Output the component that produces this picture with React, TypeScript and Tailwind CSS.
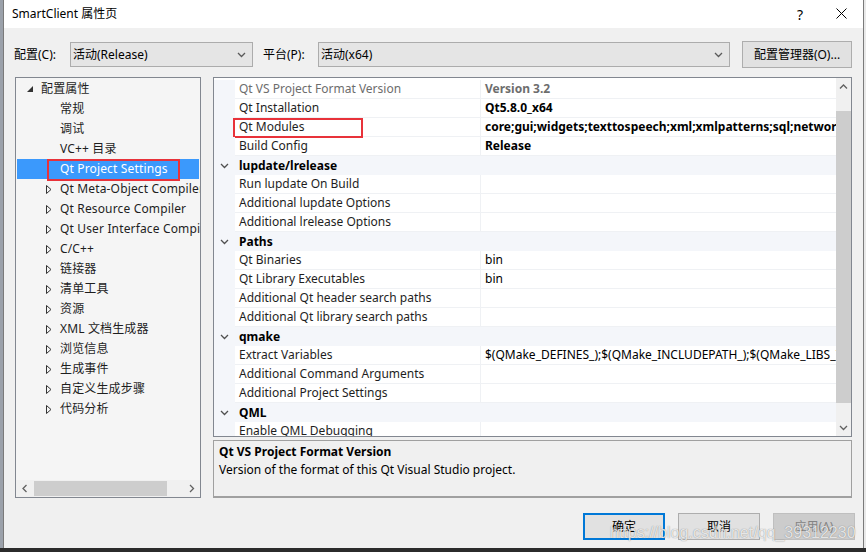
import React from 'react';

const FONT = { fontFamily: '"Noto Sans", "Noto Sans CJK SC", sans-serif' };

type TreeItem = { label: string; level: 0 | 1; arrow?: 'open' | 'closed'; selected?: boolean };

const treeItems: TreeItem[] = [
  { label: '配置属性', level: 0, arrow: 'open' },
  { label: '常规', level: 1 },
  { label: '调试', level: 1 },
  { label: 'VC++ 目录', level: 1 },
  { label: 'Qt Project Settings', level: 1, selected: true },
  { label: 'Qt Meta-Object Compiler', level: 1, arrow: 'closed' },
  { label: 'Qt Resource Compiler', level: 1, arrow: 'closed' },
  { label: 'Qt User Interface Compiler', level: 1, arrow: 'closed' },
  { label: 'C/C++', level: 1, arrow: 'closed' },
  { label: '链接器', level: 1, arrow: 'closed' },
  { label: '清单工具', level: 1, arrow: 'closed' },
  { label: '资源', level: 1, arrow: 'closed' },
  { label: 'XML 文档生成器', level: 1, arrow: 'closed' },
  { label: '浏览信息', level: 1, arrow: 'closed' },
  { label: '生成事件', level: 1, arrow: 'closed' },
  { label: '自定义生成步骤', level: 1, arrow: 'closed' },
  { label: '代码分析', level: 1, arrow: 'closed' },
];

type GridRow =
  | { kind: 'cat'; name: string }
  | { kind: 'prop'; name: string; value?: string; bold?: boolean; readOnly?: boolean; marked?: boolean };

const gridRows: GridRow[] = [
  { kind: 'prop', name: 'Qt VS Project Format Version', value: 'Version 3.2', bold: true, readOnly: true },
  { kind: 'prop', name: 'Qt Installation', value: 'Qt5.8.0_x64', bold: true },
  { kind: 'prop', name: 'Qt Modules', value: 'core;gui;widgets;texttospeech;xml;xmlpatterns;sql;network;multimedia', bold: true, marked: true },
  { kind: 'prop', name: 'Build Config', value: 'Release', bold: true },
  { kind: 'cat', name: 'lupdate/lrelease' },
  { kind: 'prop', name: 'Run lupdate On Build' },
  { kind: 'prop', name: 'Additional lupdate Options' },
  { kind: 'prop', name: 'Additional lrelease Options' },
  { kind: 'cat', name: 'Paths' },
  { kind: 'prop', name: 'Qt Binaries', value: 'bin' },
  { kind: 'prop', name: 'Qt Library Executables', value: 'bin' },
  { kind: 'prop', name: 'Additional Qt header search paths' },
  { kind: 'prop', name: 'Additional Qt library search paths' },
  { kind: 'cat', name: 'qmake' },
  { kind: 'prop', name: 'Extract Variables', value: '$(QMake_DEFINES_);$(QMake_INCLUDEPATH_);$(QMake_LIBS_);$(QMake_LIBPATH_)' },
  { kind: 'prop', name: 'Additional Command Arguments' },
  { kind: 'prop', name: 'Additional Project Settings' },
  { kind: 'cat', name: 'QML' },
  { kind: 'prop', name: 'Enable QML Debugging' },
];

function Chevron({ dir, className = '' }: { dir: 'up' | 'down' | 'left' | 'right'; className?: string }) {
  const pts = {
    down: '1,1 4.5,4.5 8,1',
    up: '1,4.5 4.5,1 8,4.5',
    left: '4.5,1 1,4.5 4.5,8',
    right: '1,1 4.5,4.5 1,8',
  }[dir];
  const vertical = dir === 'up' || dir === 'down';
  return (
    <svg width={vertical ? 9 : 6} height={vertical ? 6 : 9} viewBox={vertical ? '0 0 9 6' : '0 0 6 9'} className={className}>
      <polyline points={pts} fill="none" stroke="currentColor" strokeWidth="1.3" />
    </svg>
  );
}

function Combo({ text, width }: { text: string; width: string }) {
  return (
    <div className={`${width} h-[25px] bg-[#e5e5e5] border border-[#acacac] flex items-center pl-[2px] pr-[6px]`}>
      <span className="flex-1 text-[12px] leading-[16px] text-[#000]">{text}</span>
      <Chevron dir="down" className="text-[#5a5a5a]" />
    </div>
  );
}

function Tree() {
  return (
    <div className="w-[186px] h-[421px] border border-[#828790] bg-[#f5f5f5] flex flex-col">
      <div className="flex-1 overflow-hidden pt-[1px]">
        {treeItems.map((it) => (
          <div
            key={it.label}
            className={`relative mx-[1px] h-[20px] flex items-center whitespace-nowrap ${it.level === 0 ? 'pl-[10px]' : 'pl-[29px]'} ${it.selected ? 'bg-[#3b99fc] text-white' : 'text-[#1e1e1e]'}`}
          >
            <span className="w-[14px] shrink-0 flex items-center">
              {it.arrow === 'open' && (
                <svg width="6" height="6" viewBox="0 0 6 6">
                  <polygon points="6,0 6,6 0,6" fill="#333" />
                </svg>
              )}
              {it.arrow === 'closed' && (
                <svg width="6" height="9" viewBox="0 0 6 9">
                  <polygon points="0.5,0.5 5,4.5 0.5,8.5" fill="none" stroke="#333" strokeWidth="1" />
                </svg>
              )}
            </span>
            <span className="text-[12px] leading-[20px] tracking-[0.15px]">{it.label}</span>
            {it.selected && (
              <div className="absolute left-[30px] top-0 w-[133px] h-[22px] border-2 border-[#e8323a]" />
            )}
          </div>
        ))}
      </div>
      <div className="h-[17px] bg-[#f0f0f0] flex items-center">
        <div className="w-[17px] h-full flex items-center justify-center text-[#606060]">
          <Chevron dir="left" />
        </div>
        <div className="ml-[1px] w-[133px] h-[15px] bg-[#cdcdcd]" />
        <div className="flex-1" />
        <div className="w-[17px] h-full flex items-center justify-center text-[#606060]">
          <Chevron dir="right" />
        </div>
      </div>
    </div>
  );
}

function Grid() {
  return (
    <div className="w-[639px] h-[360px] border border-[#828790] bg-white flex">
      <div className="flex-1 overflow-hidden pt-[2px]">
        {gridRows.map((r) =>
          r.kind === 'cat' ? (
            <div key={r.name} className="h-[19px] bg-[#f4f6fa] flex items-center">
              <div className="w-[21px] flex justify-center text-[#505050]">
                <Chevron dir="down" />
              </div>
              <span className="pl-[4px] text-[12px] leading-[19px] font-bold text-[#000]">{r.name}</span>
            </div>
          ) : (
            <div key={r.name} className="relative h-[19px] flex whitespace-nowrap">
              <div className="w-[21px] bg-[#f4f6fa]" />
              <div
                className={`w-[246px] border-b border-r border-[#eff1f4] pl-[4px] text-[12px] leading-[18px] overflow-hidden ${r.readOnly ? 'text-[#6d6d6d]' : 'text-[#1e1e1e]'}`}
              >
                {r.name}
              </div>
              <div
                className={`flex-1 border-b border-[#eff1f4] pl-[4px] text-[12px] leading-[18px] overflow-hidden ${r.bold ? 'font-bold' : ''} ${r.readOnly ? 'text-[#6d6d6d]' : 'text-[#000]'}`}
              >
                {r.value}
              </div>
              {r.marked && (
                <div className="absolute left-[19px] top-0 w-[130px] h-[20px] border-2 border-[#e8323a]" />
              )}
            </div>
          )
        )}
      </div>
      <div className="w-[15px] bg-[#f0f0f0] flex flex-col">
        <div className="h-[17px] flex items-center justify-center text-[#606060]">
          <Chevron dir="up" />
        </div>
        <div className="h-[16px]" />
        <div className="h-[292px] bg-[#cdcdcd]" />
        <div className="flex-1" />
        <div className="h-[17px] flex items-center justify-center text-[#606060]">
          <Chevron dir="down" />
        </div>
      </div>
    </div>
  );
}

function DialogButton({ label, primary, disabled }: { label: string; primary?: boolean; disabled?: boolean }) {
  return (
    <div
      className={`w-[82px] h-[27px] flex items-center justify-center text-[12px] ${
        primary
          ? 'border-2 border-[#0078d7] bg-[#e1e1e1] text-[#000]'
          : disabled
            ? 'border border-[#bfbfbf] bg-[#cccccc] text-[#838383]'
            : 'border border-[#adadad] bg-[#e1e1e1] text-[#000]'
      }`}
    >
      {label}
    </div>
  );
}

export default function App() {
  return (
    <div className="relative w-[866px] h-[552px] flex flex-col bg-[#2b2d33] overflow-hidden" style={FONT}>
      <div className="flex flex-1 min-h-0">
        <div className="w-[3px] bg-[#9ba1aa]" />
        <div className="flex-1 flex flex-col border-l border-r border-[#7a7a7a] bg-[#f0f0f0]">
          {/* title bar */}
          <div className="h-[28px] bg-white flex items-center pl-[8px] pr-[16px]">
            <span className="flex-1 text-[12px] text-[#000]">SmartClient 属性页</span>
            <span className="text-[14px] text-[#000] mr-[33px]">?</span>
            <svg width="11" height="11" viewBox="0 0 11 11" className="mb-[1px]">
              <path d="M0.5 0.5 L10.5 10.5 M10.5 0.5 L0.5 10.5" stroke="#000" strokeWidth="1" />
            </svg>
          </div>

          {/* configuration row */}
          <div className="mt-[13px] h-[27px] flex items-center pl-[10px] text-[12px] text-[#000]">
            <span className="w-[56px]">配置(C):</span>
            <Combo text="活动(Release)" width="w-[183px]" />
            <span className="ml-[10px] w-[55px]">平台(P):</span>
            <Combo text="活动(x64)" width="w-[412px]" />
            <div className="ml-[12px] w-[110px] h-[27px] bg-[#e1e1e1] border border-[#adadad] flex items-center justify-center">
              配置管理器(O)...
            </div>
          </div>

          {/* main area */}
          <div className="mt-[9px] flex pl-[11px] gap-[12px]">
            <Tree />
            <div className="flex flex-col gap-[3px]">
              <Grid />
              <div className="h-[58px] bg-[#f0f0f0] border border-[#a0a0a0] border-b-2 pl-[5px] pt-[2px]">
                <div className="text-[12px] leading-[18px] font-bold text-[#000]">Qt VS Project Format Version</div>
                <div className="text-[12px] leading-[18px] text-[#000]">Version of the format of this Qt Visual Studio project.</div>
              </div>
            </div>
          </div>

          {/* buttons */}
          <div className="mt-[15px] flex justify-end gap-[13px] pr-[8px]">
            <DialogButton label="确定" primary />
            <DialogButton label="取消" />
            <DialogButton label="应用(A)" disabled />
          </div>
        </div>
        <div className="w-[2px] bg-[#e9e9e9]" />
      </div>
      <div className="h-[4px] bg-[#2b2b2b]" />

      {/* watermark */}
      <div
        className="absolute left-[610px] top-[523px] text-[16px] leading-[20px] text-white/80 [text-shadow:0_0_1px_rgba(0,0,0,0.5)] whitespace-nowrap"
        style={{ fontFamily: '"Liberation Sans", sans-serif' }}
      >
        https://blog.csdn.net/qq_39312230
      </div>
    </div>
  );
}
